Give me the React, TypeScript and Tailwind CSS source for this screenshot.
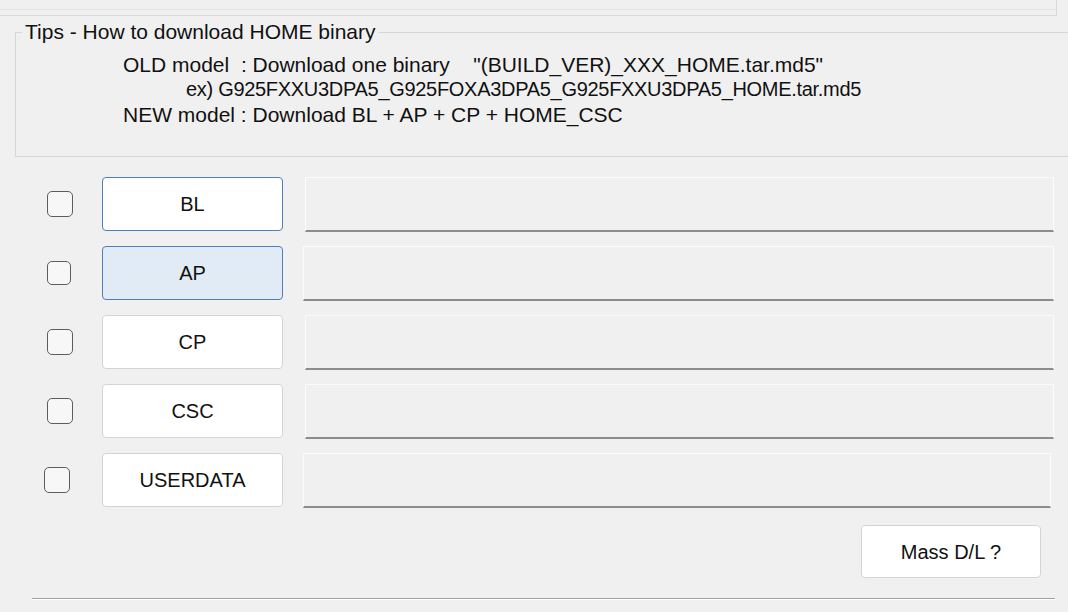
import React from 'react';

const rows = [
  { label: 'BL', style: 'border-[#4f7fb8] bg-white', cb: 'ml-[47px] w-[26px] h-[26px]', btn: 'ml-[29px]', field: 'ml-[22px] w-[749px]' },
  { label: 'AP', style: 'border-[#4f7fb8] bg-[#e1ebf6]', cb: 'ml-[47px] w-[24px] h-[24px]', btn: 'ml-[31px]', field: 'ml-[20px] w-[751px]' },
  { label: 'CP', style: 'border-[#d4d4d4] bg-white', cb: 'ml-[47px] w-[26px] h-[26px]', btn: 'ml-[29px]', field: 'ml-[22px] w-[749px]' },
  { label: 'CSC', style: 'border-[#d4d4d4] bg-white', cb: 'ml-[47px] w-[26px] h-[26px]', btn: 'ml-[29px]', field: 'ml-[22px] w-[749px]' },
  { label: 'USERDATA', style: 'border-[#d4d4d4] bg-white', cb: 'ml-[44px] w-[26px] h-[26px]', btn: 'ml-[32px]', field: 'ml-[20px] w-[748px]' },
];

function App() {
  return (
    <div className="w-[1068px] h-[612px] overflow-hidden bg-[#f0f0f0] text-[#111] font-['Liberation_Sans',Arial,sans-serif]">
      {/* top panel edge */}
      <div className="h-[16px] w-[1057px] border-r border-b border-[#dadada]">
        <div className="h-[10px] border-b border-[#e2e2e2]" />
      </div>

      {/* tips group box */}
      <div className="relative mt-[16px] ml-[15px] h-[125px] border-t border-l border-b border-[#d6d6d6] pt-[19px] pl-[107px] text-[21px] leading-[25px]">
        <span className="absolute left-[6px] top-[-13px] bg-[#f0f0f0] px-[3px] leading-[24px]">
          Tips - How to download HOME binary
        </span>
        <div className="whitespace-pre">OLD model  : Download one binary    "(BUILD_VER)_XXX_HOME.tar.md5"</div>
        <div className="whitespace-pre pl-[63px] text-[20px] tracking-[-0.3px]">ex) G925FXXU3DPA5_G925FOXA3DPA5_G925FXXU3DPA5_HOME.tar.md5</div>
        <div className="whitespace-pre">NEW model : Download BL + AP + CP + HOME_CSC</div>
      </div>

      {/* binary rows */}
      <div className="mt-[20px] flex flex-col gap-[15px]">
        {rows.map((r) => (
          <div key={r.label} className="flex items-center h-[54px]">
            <div className={`${r.cb} shrink-0 rounded-[5px] border-[1.5px] border-[#5c5c5c] bg-[#f7f7f7]`} />
            <button className={`${r.btn} w-[181px] h-[54px] shrink-0 rounded-[4px] border text-[20px] ${r.style}`}>
              {r.label}
            </button>
            <div className={`${r.field} h-[55px] border-t border-l border-r border-[#fbfbfb] border-b-2 border-b-[#8c8c8c] bg-[#f0f0f0]`} />
          </div>
        ))}
      </div>

      <div className="flex justify-end pr-[27px] mt-[18px]">
        <button className="w-[180px] h-[53px] rounded-[4px] border border-[#d4d4d4] bg-white text-[20px]">
          Mass D/L ?
        </button>
      </div>

      <div className="mt-[20px] ml-[32px] w-[1023px] border-t border-[#a0a0a0] border-b border-b-white" />
    </div>
  );
}

export default App;
